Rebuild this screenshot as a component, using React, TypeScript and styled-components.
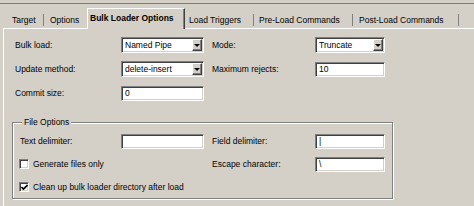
import React from "react";
import styled, { createGlobalStyle } from "styled-components";

const Global = createGlobalStyle`
  html, body { margin: 0; padding: 0; background: #d4d0c8; }
  body {
    font-family: "Liberation Sans", Arial, sans-serif;
    font-size: 8.5px;
    color: #000;
  }
  * { box-sizing: border-box; }
`;

const Window = styled.div`
  width: 474px;
  height: 206px;
  overflow: hidden;
  background: #d4d0c8;
  padding-top: 3px;
`;

const Frame = styled.div`
  border-top: 1px solid #7a7a7a;
  height: 203px;
  display: flex;
  flex-direction: column;
`;

const TabStrip = styled.div`
  display: flex;
  align-items: flex-end;
  height: 25px;
  margin-left: 3px;
  padding-left: 2px;
  box-shadow: inset 0 -1px 0 #fff;
  flex: none;
`;

const Tab = styled.div<{ $w: number; $pad: number; $sep?: boolean }>`
  width: ${(p) => p.$w}px;
  height: 12px;
  margin-bottom: 3px;
  line-height: 12px;
  padding-left: ${(p) => p.$pad}px;
  white-space: nowrap;
  border-right: ${(p) => (p.$sep ? "1px solid #808080" : "none")};
`;

const ActiveTab = styled.div<{ $w: number; $pad: number }>`
  width: ${(p) => p.$w}px;
  height: 21px;
  padding-top: 4px;
  padding-left: ${(p) => p.$pad}px;
  line-height: 10px;
  font-weight: bold;
  white-space: nowrap;
  background: #d4d0c8;
  border-top: 1px solid #fff;
  border-left: 1px solid #fff;
  border-right: 1px solid #404040;
  box-shadow: inset -1px 0 0 #808080;
`;

const Panel = styled.div`
  flex: 1;
  margin-left: 3px;
  border-left: 1px solid #fff;
  display: flex;
  flex-direction: column;
`;

const Upper = styled.div`
  display: grid;
  grid-template-columns: 106px 83px 111px 70px;
  grid-auto-rows: 16px;
  row-gap: 8px;
  align-items: center;
  padding: 8px 0 0 11px;
`;

const Label = styled.span<{ $second?: boolean }>`
  white-space: nowrap;
  line-height: 12px;
  margin-left: ${(p) => (p.$second ? "8px" : "0")};
`;

const Sunken = styled.div<{ $h: number }>`
  height: ${(p) => p.$h}px;
  background: #fff;
  border-top: 1px solid #808080;
  border-left: 1px solid #808080;
  border-right: 1px solid #fff;
  border-bottom: 1px solid #fff;
  box-shadow: inset 1px 1px 0 #404040, inset -1px -1px 0 #d4d0c8;
  display: flex;
  align-items: center;
  padding: 0 2px 0 3px;
  white-space: nowrap;
  line-height: 11px;
`;

const ComboText = styled.span`
  flex: 1;
  overflow: hidden;
`;

const DropButton = styled.span`
  width: 10px;
  height: 12px;
  margin-right: -1px;
  background: #d4d0c8;
  border-top: 1px solid #fff;
  border-left: 1px solid #fff;
  border-right: 1px solid #404040;
  border-bottom: 1px solid #404040;
  box-shadow: inset -1px -1px 0 #808080;
  display: flex;
  align-items: center;
  justify-content: center;
  &::after {
    content: "";
    width: 0;
    height: 0;
    border-left: 3px solid transparent;
    border-right: 3px solid transparent;
    border-top: 3px solid #000;
    margin-right: 1px;
  }
`;

const Group = styled.fieldset`
  margin: 16px 0 0 8px;
  width: 381px;
  padding: 6px 6px 3px 7px;
  border: 1px solid #808080;
  box-shadow: inset 1px 1px 0 #fff, 1px 1px 0 #fff;
  min-inline-size: 0;
`;

const Legend = styled.legend`
  padding: 0 2px;
  margin-left: 2px;
  line-height: 10px;
  background: #d4d0c8;
`;

const GroupGrid = styled.div`
  display: grid;
  grid-template-columns: 101px 83px 111px 70px;
  grid-auto-rows: 16px;
  row-gap: 7px;
  align-items: center;
`;

const CheckRow = styled.label<{ $span: string }>`
  grid-column: ${(p) => p.$span};
  display: flex;
  align-items: center;
  gap: 4px;
  white-space: nowrap;
  margin-left: -1px;
`;

const CheckBox = styled.span`
  width: 10px;
  height: 10px;
  flex: none;
  background: #fff;
  border-top: 1px solid #808080;
  border-left: 1px solid #808080;
  border-right: 1px solid #fff;
  border-bottom: 1px solid #fff;
  box-shadow: inset 1px 1px 0 #404040, inset -1px -1px 0 #d4d0c8;
  display: flex;
  align-items: center;
  justify-content: center;
`;

function Combo({ value }: { value: string }) {
  return (
    <Sunken $h={16}>
      <ComboText>{value}</ComboText>
      <DropButton />
    </Sunken>
  );
}

function Field({ value }: { value: string }) {
  return <Sunken $h={15}>{value}</Sunken>;
}

function Check({ checked, label, span }: { checked: boolean; label: string; span: string }) {
  return (
    <CheckRow $span={span}>
      <CheckBox>
        {checked && (
          <svg width="7" height="7" viewBox="0 0 7 7">
            <path d="M0.5 3 L2.5 5 L6.5 1" stroke="#000" strokeWidth="1.7" fill="none" />
          </svg>
        )}
      </CheckBox>
      {label}
    </CheckRow>
  );
}

export default function App() {
  return (
    <>
      <Global />
      <Window>
        <Frame>
          <TabStrip>
            <Tab $w={39} $pad={7} $sep>Target</Tab>
            <Tab $w={43} $pad={6}>Options</Tab>
            <ActiveTab $w={98} $pad={2}>Bulk Loader Options</ActiveTab>
            <Tab $w={69} $pad={4} $sep>Load Triggers</Tab>
            <Tab $w={99} $pad={5} $sep>Pre-Load Commands</Tab>
            <Tab $w={106} $pad={6} $sep>Post-Load Commands</Tab>
          </TabStrip>
          <Panel>
            <Upper>
              <Label>Bulk load:</Label>
              <Combo value="Named Pipe" />
              <Label $second>Mode:</Label>
              <Combo value="Truncate" />
              <Label>Update method:</Label>
              <Combo value="delete-insert" />
              <Label $second>Maximum rejects:</Label>
              <Field value="10" />
              <Label>Commit size:</Label>
              <Field value="0" />
            </Upper>
            <Group>
              <Legend>File Options</Legend>
              <GroupGrid>
                <Label>Text delimiter:</Label>
                <Field value="" />
                <Label $second>Field delimiter:</Label>
                <Field value="|" />
                <Check checked={false} label="Generate files only" span="1 / 3" />
                <Label $second>Escape character:</Label>
                <Field value="\" />
                <Check checked label="Clean up bulk loader directory after load" span="1 / 5" />
              </GroupGrid>
            </Group>
          </Panel>
        </Frame>
      </Window>
    </>
  );
}
